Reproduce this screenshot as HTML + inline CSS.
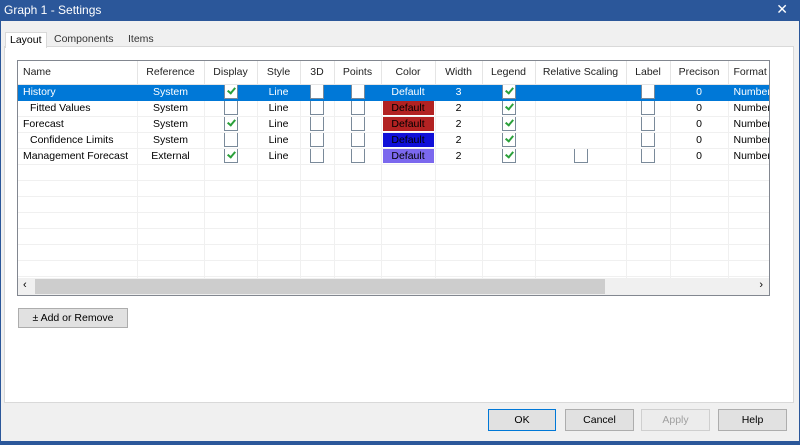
<!DOCTYPE html>
<html><head><style>
*{box-sizing:border-box;margin:0;padding:0}
body{width:800px;height:445px;background:#f0f0f0;font-family:"Liberation Sans",sans-serif;font-size:10.5px;color:#000;position:relative;overflow:hidden}
.title{position:absolute;left:0;top:0;width:800px;height:21px;background:#2b579a;color:#fff;font-size:12px;padding:3px 0 0 4px}
.x{position:absolute;right:12px;top:1px;font-size:14px;color:#fff}
.bot{position:absolute;left:0;top:441px;width:800px;height:4px;background:#2b579a}
.lb{position:absolute;left:0;top:21px;width:1px;height:424px;background:#2b579a}
.rb{position:absolute;right:0;top:21px;width:1px;height:424px;background:#2b579a}
.panel{position:absolute;left:4px;top:46px;width:790px;height:357px;background:#fff;border:1px solid #d9d9d9}
.tab{position:absolute;top:32px;height:15px;font-size:10.5px;padding-top:1px}
.tab.a{left:5px;width:42px;background:#fff;border:1px solid #d9d9d9;border-bottom:none;height:16px;padding-left:4px}
.grid{position:absolute;left:17px;top:60px;width:753px;height:236px;border:1px solid #828790;background:#fff;overflow:hidden}
table{border-collapse:collapse;table-layout:fixed;width:796px}
td{height:16px;border-right:1px solid #f0f0f0;border-bottom:1px solid #f0f0f0;text-align:center;white-space:nowrap;overflow:hidden;padding:0;font-size:10.5px;position:relative}
tr.h td{height:23px;border-right:1px solid #e5e5e5;border-bottom:1px solid #e5e5e5;color:#222}
td.l{text-align:left;padding-left:5px}
td.i{padding-left:12px}
tr.s td{background:#0078d7;color:#fff;border-color:#0078d7}
.cb{display:inline-block;width:14px;height:15px;border:1px solid #7a8a9a;background:#fff;vertical-align:middle;position:relative;top:-1px}
.cb.k::after{content:"";position:absolute;left:4px;top:1px;width:3px;height:6px;border:solid #2aa03a;border-width:0 2px 2px 0;transform:rotate(40deg)}
td.c{padding:0 1px}
.sw{display:block;height:14px;line-height:14px;color:#000}
.sb{position:absolute;left:0;top:217px;width:751px;height:17px;background:#f0f0f0}
.th{position:absolute;left:17px;top:1px;width:570px;height:15px;background:#cdcdcd}
.btn{position:absolute;height:22px;border:1px solid #adadad;background:#e1e1e1;text-align:center;line-height:20px;font-size:10.5px}
</style></head><body>
<div class="title">Graph 1 - Settings<span class="x">✕</span></div>
<div class="lb"></div><div class="rb"></div>
<div class="panel"></div>
<div class="tab a">Layout</div>
<div class="tab" style="left:54px;color:#333">Components</div>
<div class="tab" style="left:128px;color:#333">Items</div>
<div class="grid">
<table>
<colgroup><col style="width:119px"><col style="width:67px"><col style="width:53px"><col style="width:43px"><col style="width:34px"><col style="width:47px"><col style="width:54px"><col style="width:47px"><col style="width:53px"><col style="width:91px"><col style="width:44px"><col style="width:58px"><col style="width:86px"></colgroup>
<tr class="h"><td class="l">Name</td><td>Reference</td><td>Display</td><td>Style</td><td>3D</td><td>Points</td><td>Color</td><td>Width</td><td>Legend</td><td>Relative Scaling</td><td>Label</td><td>Precison</td><td class="l">Format</td></tr>
<tr class="s"><td class="l">History</td><td>System</td><td><span class="cb k"></span></td><td>Line</td><td><span class="cb"></span></td><td><span class="cb"></span></td><td class="c"><span class="sw" style="color:#fff">Default</span></td><td>3</td><td><span class="cb k"></span></td><td></td><td><span class="cb"></span></td><td>0</td><td class="l">Number</td></tr>
<tr><td class="l i">Fitted Values</td><td>System</td><td><span class="cb"></span></td><td>Line</td><td><span class="cb"></span></td><td><span class="cb"></span></td><td class="c"><span class="sw" style="background:#b22222">Default</span></td><td>2</td><td><span class="cb k"></span></td><td></td><td><span class="cb"></span></td><td>0</td><td class="l">Number</td></tr>
<tr><td class="l">Forecast</td><td>System</td><td><span class="cb k"></span></td><td>Line</td><td><span class="cb"></span></td><td><span class="cb"></span></td><td class="c"><span class="sw" style="background:#b22222">Default</span></td><td>2</td><td><span class="cb k"></span></td><td></td><td><span class="cb"></span></td><td>0</td><td class="l">Number</td></tr>
<tr><td class="l i">Confidence Limits</td><td>System</td><td><span class="cb"></span></td><td>Line</td><td><span class="cb"></span></td><td><span class="cb"></span></td><td class="c"><span class="sw" style="background:#1010d8">Default</span></td><td>2</td><td><span class="cb k"></span></td><td></td><td><span class="cb"></span></td><td>0</td><td class="l">Number</td></tr>
<tr><td class="l">Management Forecast</td><td>External</td><td><span class="cb k"></span></td><td>Line</td><td><span class="cb"></span></td><td><span class="cb"></span></td><td class="c"><span class="sw" style="background:#7b68ee">Default</span></td><td>2</td><td><span class="cb k"></span></td><td><span class="cb"></span></td><td><span class="cb"></span></td><td>0</td><td class="l">Number</td></tr>
<tr><td></td><td></td><td></td><td></td><td></td><td></td><td></td><td></td><td></td><td></td><td></td><td></td><td></td></tr>
<tr><td></td><td></td><td></td><td></td><td></td><td></td><td></td><td></td><td></td><td></td><td></td><td></td><td></td></tr>
<tr><td></td><td></td><td></td><td></td><td></td><td></td><td></td><td></td><td></td><td></td><td></td><td></td><td></td></tr>
<tr><td></td><td></td><td></td><td></td><td></td><td></td><td></td><td></td><td></td><td></td><td></td><td></td><td></td></tr>
<tr><td></td><td></td><td></td><td></td><td></td><td></td><td></td><td></td><td></td><td></td><td></td><td></td><td></td></tr>
<tr><td></td><td></td><td></td><td></td><td></td><td></td><td></td><td></td><td></td><td></td><td></td><td></td><td></td></tr>
<tr><td></td><td></td><td></td><td></td><td></td><td></td><td></td><td></td><td></td><td></td><td></td><td></td><td></td></tr>
<tr><td></td><td></td><td></td><td></td><td></td><td></td><td></td><td></td><td></td><td></td><td></td><td></td><td></td></tr>
</table>
<div class="sb"><span style="position:absolute;left:5px;top:1px;font-size:11px">‹</span><div class="th"></div><span style="position:absolute;right:6px;top:1px;font-size:11px">›</span></div>
</div>
<div class="btn" style="left:18px;top:308px;width:110px;height:20px;line-height:18px">± Add or Remove</div>
<div class="btn" style="left:488px;top:409px;width:68px;border-color:#0078d7">OK</div>
<div class="btn" style="left:565px;top:409px;width:69px">Cancel</div>
<div class="btn" style="left:641px;top:409px;width:69px;color:#a0a0a0;background:#ececec;border-color:#cfcfcf">Apply</div>
<div class="btn" style="left:718px;top:409px;width:69px">Help</div>
<div class="bot"></div>
</body></html>
